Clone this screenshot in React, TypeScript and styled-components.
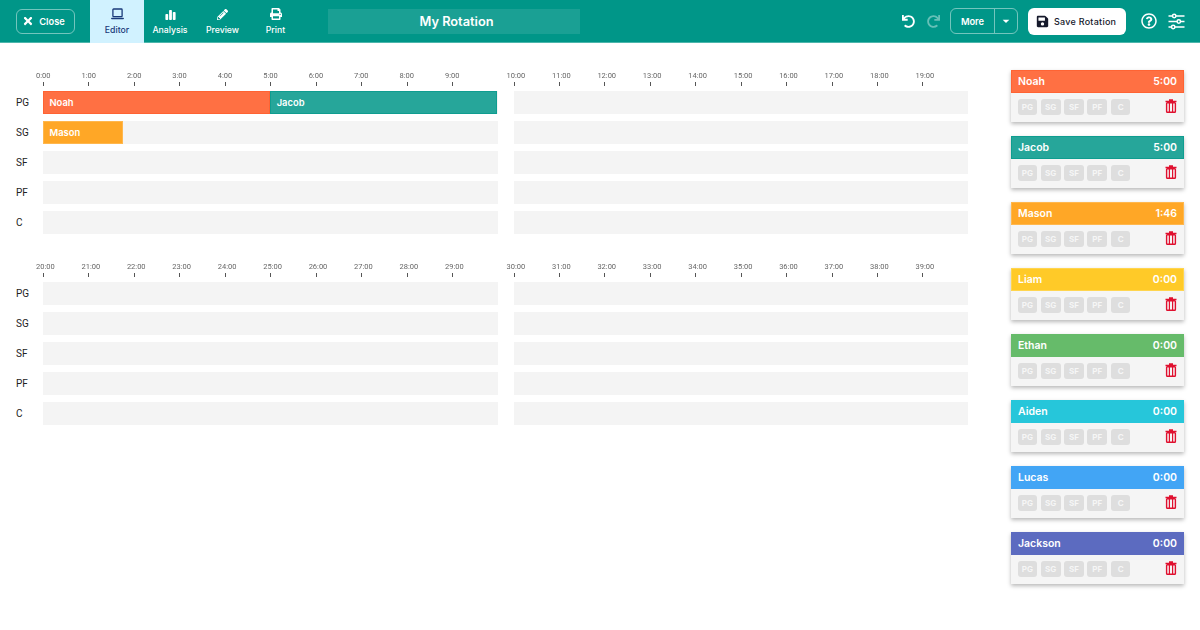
import React from "react";
import styled, { createGlobalStyle } from "styled-components";
import { FaTimes, FaPencilAlt, FaPrint, FaSave, FaUndo, FaRedo, FaRegQuestionCircle } from "react-icons/fa";
import { MdArrowDropDown } from "react-icons/md";

const Global = createGlobalStyle`
  html, body { margin: 0; padding: 0; background: #fff; }
  body { width: 1200px; height: 630px; overflow: hidden; font-family: "Inter", "Liberation Sans", sans-serif; }
`;

const Page = styled.div`display: flex; flex-direction: column; width: 1200px; height: 630px;`;

const Header = styled.header`
  display: flex; align-items: center; height: 42px; flex: none;
  background: #009688; border-bottom: 1px solid #4db6ac; box-sizing: content-box; padding-left: 16px; color: #fff;
`;
const CloseButton = styled.button`
  display: flex; align-items: center; justify-content: center; gap: 5px; width: 59px; height: 25px; padding: 0 4px 0 0;
  border: 1px solid rgba(255,255,255,.45); border-radius: 6px; background: transparent; color: #fff;
  font: 600 9.3px "Inter", sans-serif; margin-right: 15px;
`;
const Tab = styled.div<{ $active?: boolean; $width: number }>`
  display: flex; flex-direction: column; align-items: center;
  width: ${p => p.$width}px; height: 43px; padding-top: 7px; box-sizing: border-box; margin-bottom: -1px;
  background: ${p => (p.$active ? "#d1f2ff" : "transparent")};
  color: ${p => (p.$active ? "#1a3a7a" : "#fff")};
  font: 500 8.7px/11px "Inter", sans-serif;
`;
const TabIcon = styled.span`display: flex; align-items: center; justify-content: center; height: 14px; margin-bottom: 4px;`;
const Title = styled.div`
  width: 252px; height: 25px; margin-left: 26px; padding-left: 5px; box-sizing: border-box; background: rgba(255,255,255,.1);
  display: flex; align-items: center; justify-content: center; font: 600 12.8px "Inter", sans-serif;
`;
const HeaderRight = styled.div`display: flex; align-items: center; margin-left: auto; padding-right: 15px;`;
const HistoryIcon = styled.span<{ $off?: boolean }>`
  display: flex; margin-right: ${p => (p.$off ? 10 : 12)}px; opacity: ${p => (p.$off ? 0.4 : 1)};
`;
const MoreGroup = styled.div`
  display: flex; align-items: stretch; width: 68px; height: 26px; box-sizing: border-box;
  border: 1px solid rgba(255,255,255,.45); border-radius: 6px;
`;
const MoreLabel = styled.div`
  flex: 1; display: flex; align-items: center; justify-content: center; font: 600 9.3px "Inter", sans-serif;
  border-right: 1px solid rgba(255,255,255,.45);
`;
const MoreCaret = styled.div`width: 22px; display: flex; align-items: center; justify-content: center;`;
const SaveButton = styled.button`
  display: flex; align-items: center; gap: 5px; width: 98px; height: 27px; margin: 0 15px 0 10px; padding: 0 0 0 8px;
  background: #fff; border: 0; border-radius: 6px; color: #15192b; font: 500 9px "Inter", sans-serif; letter-spacing: .25px;
`;
const ToolIcon = styled.span`display: flex; margin-right: 11px;`;
const SliderIcon = styled.span`display: flex;`;

const Main = styled.main`display: flex; flex: 1; padding: 0 16px; justify-content: space-between;`;
const Charts = styled.div`display: flex; flex-direction: column; gap: 20px; padding-top: 27px;`;
const Block = styled.section`display: flex; flex-direction: column;`;
const AxisRow = styled.div`display: flex; gap: 16px; margin-left: 27px; margin-bottom: 5px; will-change: transform;`;
const Axis = styled.div`display: flex; width: 454.5px;`;
const TickCell = styled.div`width: 45.45px; flex: none; display: flex; flex-direction: column;`;
const TickLabel = styled.span`
  margin-left: -7px; height: 10px; font: 7.5px/11px "Roboto", "Liberation Sans", sans-serif; color: #666; white-space: nowrap;
`;
const TickMark = styled.i`display: block; width: 1px; height: 4px; margin-top: 2px; background: #555;`;
const LaneRow = styled.div`display: flex; align-items: center; height: 23px; margin-bottom: 7px;`;
const LaneLabel = styled.div`width: 27px; font: 10px "Roboto", "Liberation Sans", sans-serif; color: #222;`;
const Lane = styled.div`display: flex; width: 454.5px; height: 23px; background: #f4f4f4; margin-right: 16px;`;
const Stint = styled.div<{ $color: string; $edge: string; $width: number }>`
  width: ${p => p.$width}px; box-sizing: border-box; display: flex; align-items: center; padding-left: 6.5px;
  background: ${p => p.$color}; box-shadow: inset 0 0 0 1px ${p => p.$edge}; color: #fff; font: 600 9.4px "Inter", sans-serif;
`;

const Roster = styled.aside`display: flex; flex-direction: column; gap: 14px; width: 173px; padding-top: 27px;`;
const Card = styled.article`background: #f5f5f5; box-shadow: 0 2px 4px rgba(0,0,0,.28);`;
const CardHead = styled.div<{ $color: string; $edge: string }>`
  display: flex; justify-content: space-between; align-items: center; height: 22.5px; padding: 0 7px; box-sizing: border-box;
  background: ${p => p.$color}; box-shadow: inset 0 0 0 1px ${p => p.$edge}; color: #fff; font: 600 10.5px "Inter", sans-serif;
`;
const CardBody = styled.div`display: flex; align-items: center; gap: 3.5px; height: 29.5px; padding: 0 7px 0 6.5px; box-sizing: border-box; color: #e0102f;`;
const Chip = styled.span`
  width: 19.8px; height: 16px; border-radius: 3px; background: #dedede; color: #f6f6f6;
  display: flex; align-items: center; justify-content: center; font: 700 8px "Inter", sans-serif;
`;
const Trash = styled.span`display: flex; margin-left: auto; margin-top: -3px;`;

const LaptopIcon = () => (
  <svg width="13" height="12" viewBox="0 0 13 12" fill="none" stroke="currentColor" aria-hidden="true">
    <rect x="1.9" y="1" width="9.2" height="7.6" rx=".7" strokeWidth="1.3" />
    <path d="M.8 10.4h11.4" strokeWidth="1.5" strokeLinecap="round" />
  </svg>
);
const BarsIcon = () => (
  <svg width="13" height="13" viewBox="0 0 13 13" fill="currentColor" aria-hidden="true">
    <rect x="1.4" y="6" width="2.8" height="6" rx=".8" /><rect x="5.1" y="2" width="2.8" height="10" rx=".8" /><rect x="8.8" y="4" width="2.8" height="8" rx=".8" />
  </svg>
);
const SlidersIcon = () => (
  <svg width="17" height="17" viewBox="0 0 17 17" fill="none" stroke="currentColor" strokeWidth="1.5" aria-hidden="true">
    <path d="M.5 3h4M8 3h8.5M.5 8.5h8.5M12.5 8.5h4M.5 14h3M7 14h9.5" />
    <circle cx="6.2" cy="3" r="1.7" /><circle cx="10.8" cy="8.5" r="1.7" /><circle cx="5.2" cy="14" r="1.7" />
  </svg>
);
const TrashIcon = () => (
  <svg width="12" height="14" viewBox="0 0 12 14" fill="none" stroke="currentColor" aria-hidden="true">
    <path d="M.5 2.4h11M4 1h4" strokeWidth="1.5" />
    <rect x="1.6" y="3.8" width="8.8" height="9.4" rx=".8" strokeWidth="1.4" />
    <path d="M4.4 4v9M7.6 4v9" strokeWidth="1.2" />
  </svg>
);

const positions = ["PG", "SG", "SF", "PF", "C"];
const players = [
  { name: "Noah", time: "5:00", color: "#ff7043", edge: "#ff6333" },
  { name: "Jacob", time: "5:00", color: "#26a69a", edge: "#0f9d90" },
  { name: "Mason", time: "1:46", color: "#ffa726", edge: "#ffb74d" },
  { name: "Liam", time: "0:00", color: "#ffca28", edge: "#ffd54f" },
  { name: "Ethan", time: "0:00", color: "#66bb6a", edge: "#66bb6a" },
  { name: "Aiden", time: "0:00", color: "#26c6da", edge: "#26c6da" },
  { name: "Lucas", time: "0:00", color: "#42a5f5", edge: "#42a5f5" },
  { name: "Jackson", time: "0:00", color: "#5c6bc0", edge: "#5c6bc0" },
];
const stints: Record<string, { name: string; width: number; color: string; edge: string }[]> = {
  PG: [
    { name: "Noah", width: 227.2, color: "#ff7043", edge: "#ff6333" },
    { name: "Jacob", width: 227.3, color: "#26a69a", edge: "#0f9d90" },
  ],
  SG: [{ name: "Mason", width: 80, color: "#ffa726", edge: "#ffb74d" }],
};

const range = (start: number) => Array.from({ length: 10 }, (_, i) => start + i);

const ChartBlock = ({ start, filled }: { start: number; filled?: boolean }) => (
  <Block>
    <AxisRow>
      {[start, start + 10].map(s => (
        <Axis key={s}>
          {range(s).map(m => (
            <TickCell key={m}>
              <TickLabel>{m}:00</TickLabel>
              <TickMark />
            </TickCell>
          ))}
        </Axis>
      ))}
    </AxisRow>
    {positions.map(pos => (
      <LaneRow key={pos}>
        <LaneLabel>{pos}</LaneLabel>
        <Lane>
          {filled && (stints[pos] || []).map(s => (
            <Stint key={s.name} $color={s.color} $edge={s.edge} $width={s.width}>{s.name}</Stint>
          ))}
        </Lane>
        <Lane />
      </LaneRow>
    ))}
  </Block>
);

export default function App() {
  return (
    <Page>
      <Global />
      <Header>
        <CloseButton><FaTimes size={12} />Close</CloseButton>
        <Tab $active $width={54}><TabIcon><LaptopIcon /></TabIcon>Editor</Tab>
        <Tab $width={52}><TabIcon><BarsIcon /></TabIcon>Analysis</Tab>
        <Tab $width={53}><TabIcon><FaPencilAlt size={11} /></TabIcon>Preview</Tab>
        <Tab $width={53}><TabIcon><FaPrint size={12} /></TabIcon>Print</Tab>
        <Title>My Rotation</Title>
        <HeaderRight>
          <HistoryIcon><FaUndo size={13} /></HistoryIcon>
          <HistoryIcon $off><FaRedo size={13} /></HistoryIcon>
          <MoreGroup>
            <MoreLabel>More</MoreLabel>
            <MoreCaret><MdArrowDropDown size={16} /></MoreCaret>
          </MoreGroup>
          <SaveButton><FaSave size={13} />Save Rotation</SaveButton>
          <ToolIcon><FaRegQuestionCircle size={16} /></ToolIcon>
          <SliderIcon><SlidersIcon /></SliderIcon>
        </HeaderRight>
      </Header>
      <Main>
        <Charts>
          <ChartBlock start={0} filled />
          <ChartBlock start={20} />
        </Charts>
        <Roster>
          {players.map(p => (
            <Card key={p.name}>
              <CardHead $color={p.color} $edge={p.edge}><span>{p.name}</span><span>{p.time}</span></CardHead>
              <CardBody>
                {positions.map(pos => <Chip key={pos}>{pos}</Chip>)}
                <Trash><TrashIcon /></Trash>
              </CardBody>
            </Card>
          ))}
        </Roster>
      </Main>
    </Page>
  );
}
